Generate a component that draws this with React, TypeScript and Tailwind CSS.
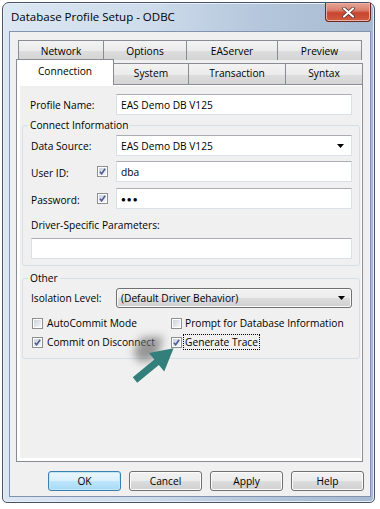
import React from 'react';

const Check: React.FC<{ checked?: boolean }> = ({ checked }) => (
  <span className="flex h-[11px] w-[11px] shrink-0 items-center justify-center border border-[#8e8f8f] bg-white p-px">
    <span className="flex h-full w-full items-center justify-center bg-linear-to-br from-[#cbd2db] to-[#f5f6f8]">
      {checked && (
        <svg width="7" height="7" viewBox="0 0 8 8">
          <path d="M1 4.3 L3 6.6 L7 0.8" stroke="#4b5d96" strokeWidth="1.8" fill="none" />
        </svg>
      )}
    </span>
  </span>
);

const DownArrow = () => (
  <svg width="7" height="4" viewBox="0 0 7 4">
    <polygon points="0,0 7,0 3.5,4" fill="#000" />
  </svg>
);

const TextBox: React.FC<{ w: string; children?: React.ReactNode }> = ({ w, children }) => (
  <div className={`${w} flex h-full items-center border border-[#dbdfe6] border-t-[#abadb3] bg-white pl-[4px]`}>
    {children}
  </div>
);

const BackTab: React.FC<{ label: string; w: string; first?: boolean }> = ({ label, w, first }) => (
  <div
    className={`${w} ${first ? '' : '-ml-px'} flex h-[20px] items-center justify-center border border-b-0 border-[#898c95] bg-[linear-gradient(#f3f3f3,#ebebeb_50%,#dddddd_51%,#d4d4d4)]`}
  >
    {label}
  </div>
);

const FrontTab: React.FC<{ label: string; w: string }> = ({ label, w }) => (
  <div
    className={`${w} -ml-px flex h-[22px] items-start justify-center border border-b-0 border-[#898c95] bg-[linear-gradient(#f3f3f3,#ebebeb_50%,#dddddd_51%,#d4d4d4)] pt-[1px]`}
  >
    {label}
  </div>
);

const Button: React.FC<{ label: string; primary?: boolean }> = ({ label, primary }) => (
  <div
    className={`flex h-[20px] w-[73px] items-center justify-center rounded-[3px] border ${
      primary
        ? 'border-[#3c7fb1] bg-[linear-gradient(#eaf6fd,#d9f0fc_50%,#bee6fd_51%,#a7d9f5)] shadow-[inset_0_0_0_1px_#c4e5f6]'
        : 'border-[#707070] bg-[linear-gradient(#f2f2f2,#ebebeb_50%,#dddddd_51%,#cfcfcf)] shadow-[inset_0_0_0_1px_#fcfcfc]'
    }`}
  >
    {label}
  </div>
);

export default function App() {
  return (
    <div className="h-[509px] w-[380px] bg-white pl-[2px] pt-[2px] text-[10.2px] leading-[16px] text-black [font-family:'Open_Sans',sans-serif]">
      <div className="flex h-[501px] w-[373px] flex-col rounded-t-[7px] rounded-b-[5px] border border-[#4b5567] bg-[linear-gradient(90deg,#dce7f3_0%,#cddbeb_40%,#b4c6db_70%,#a7bad1_100%)] pb-[5px] pl-[6px] pr-[3px] shadow-[inset_0_0_0_1px_#e6eef7]">
        {/* title bar */}
        <div className="-ml-[6px] -mr-[3px] flex h-[28px] shrink-0 items-start">
          <div className="pl-[8px] pt-[5px] text-[11.5px] leading-[17px]">Database Profile Setup - ODBC</div>
          <div className="ml-auto mr-[3px] flex h-[19px] w-[46px] items-center justify-center rounded-b-[4px] border border-t-0 border-[#6b2a22] bg-[linear-gradient(#e8a493,#d98270_40%,#c8452f_55%,#d05b40)] shadow-[inset_0_0_0_1px_#eab2a4]">
            <svg width="13" height="11" viewBox="0 0 13 11">
              <path d="M2 1.5 L11 9.5 M11 1.5 L2 9.5" stroke="#4a2a28" strokeWidth="3.6" strokeLinecap="round" />
              <path d="M2 1.5 L11 9.5 M11 1.5 L2 9.5" stroke="#ffffff" strokeWidth="2.2" strokeLinecap="round" />
            </svg>
          </div>
        </div>

        {/* client area */}
        <div className="flex flex-1 flex-col border border-[#8294ad] bg-[#f0f0f0] pt-[8px]">
          {/* tabs */}
          <div className="ml-[8px] flex">
            <BackTab label="Network" w="w-[86px]" first />
            <BackTab label="Options" w="w-[84px]" />
            <BackTab label="EAServer" w="w-[92px]" />
            <BackTab label="Preview" w="w-[85px]" />
          </div>
          <div className="ml-[6px] flex h-[25px] items-end">
            <div className="relative z-10 flex h-[26px] w-[98px] items-start justify-center border border-b-0 border-[#898c95] bg-white pt-[3px]">
              Connection
            </div>
            <FrontTab label="System" w="w-[76px]" />
            <FrontTab label="Transaction" w="w-[98px]" />
            <FrontTab label="Syntax" w="w-[78px]" />
          </div>

          {/* tab page */}
          <div className="-mt-px ml-[6px] h-[378px] w-[347px] border border-[#898c95] bg-white pb-[3px] pl-[3px] pr-px pt-px">
            <div className="relative h-full bg-[#f0f0f0] pt-[8px]">
              <div className="flex h-[21px] items-center pl-[10px]">
                <div className="w-[86px]">Profile Name:</div>
                <TextBox w="w-[236px]">EAS Demo DB V125</TextBox>
              </div>

              <fieldset className="ml-[2px] mt-[2px] w-[338px] rounded-[3px] border border-[#d5dfe5] pb-[6px] pl-[8px] pr-[6px]">
                <legend className="-ml-[3px] px-[2px]">Connect Information</legend>
                <div className="mt-[2px] flex h-[21px] items-center">
                  <div className="w-[85px]">Data Source:</div>
                  <div className="flex h-full w-[236px] items-center justify-between border border-[#dbdfe6] border-t-[#abadb3] bg-white pl-[4px] pr-[7px]">
                    <span>EAS Demo DB V125</span>
                    <DownArrow />
                  </div>
                </div>
                <div className="mt-[5px] flex h-[21px] items-center">
                  <div className="w-[66px] pt-[2px]">User ID:</div>
                  <div className="w-[19px]">
                    <Check checked />
                  </div>
                  <TextBox w="w-[236px]">dba</TextBox>
                </div>
                <div className="mt-[6px] flex h-[21px] items-center">
                  <div className="w-[66px] pt-[2px]">Password:</div>
                  <div className="w-[19px]">
                    <Check checked />
                  </div>
                  <TextBox w="w-[236px]">
                    <span className="text-[8px] tracking-[1px]">●●●</span>
                  </TextBox>
                </div>
                <div className="mt-[8px]">Driver-Specific Parameters:</div>
                <div className="mt-[5px] h-[21px]">
                  <TextBox w="w-[321px]" />
                </div>
              </fieldset>

              <fieldset className="ml-[2px] mt-[4px] w-[338px] rounded-[3px] border border-[#d5dfe5] pb-[8px] pl-[9px] pr-[6px]">
                <legend className="-ml-[4px] px-[2px]">Other</legend>
                <div className="-ml-px mt-[2px] flex h-[20px] items-center">
                  <div className="w-[85px]">Isolation Level:</div>
                  <div className="flex h-full w-[236px] items-center justify-between rounded-[3px] border border-[#707070] bg-[linear-gradient(#f2f2f2,#ebebeb_50%,#dddddd_51%,#cfcfcf)] pl-[4px] pr-[6px] shadow-[inset_0_0_0_1px_#fbfbfb]">
                    <span>(Default Driver Behavior)</span>
                    <DownArrow />
                  </div>
                </div>
                <div className="mt-[7px] flex h-[16px] items-center">
                  <div className="flex w-[139px] items-center gap-[4px]">
                    <Check />
                    <span>AutoCommit Mode</span>
                  </div>
                  <div className="flex items-center gap-[3px]">
                    <Check />
                    <span>Prompt for Database Information</span>
                  </div>
                </div>
                <div className="mt-[3px] flex h-[16px] items-center">
                  <div className="flex w-[139px] items-center gap-[4px]">
                    <Check checked />
                    <span>Commit on Disconnect</span>
                  </div>
                  <div className="flex items-center gap-px">
                    <Check checked />
                    <span className="border border-dotted border-black px-[1px] leading-[14px]">Generate Trace</span>
                  </div>
                </div>
              </fieldset>

              {/* annotation arrow */}
              <svg
                className="pointer-events-none absolute left-0 top-0"
                width="341"
                height="372"
                viewBox="20 85 341 372"
              >
                <defs>
                  <filter id="blur" x="-80%" y="-80%" width="260%" height="260%">
                    <feGaussianBlur stdDeviation="4.5" />
                  </filter>
                </defs>
                <g filter="url(#blur)" opacity="0.7">
                  <g transform="translate(126 366) rotate(-39.5)">
                    <path d="M14 -6 L30 -13 L48 0 L30 13 L14 6 Z" fill="#6f6f6f" />
                  </g>
                </g>
                <g transform="translate(135 379) rotate(-39.5)">
                  <path d="M0 -3.5 L28 -3.5 L28 -12 L50 0 L28 12 L28 3.5 L0 3.5 Z" fill="#327f7c" />
                </g>
              </svg>
            </div>
          </div>

          {/* buttons */}
          <div className="ml-[38px] mt-[9px] flex gap-[8px]">
            <Button label="OK" primary />
            <Button label="Cancel" />
            <Button label="Apply" />
            <Button label="Help" />
          </div>
        </div>
      </div>
    </div>
  );
}
